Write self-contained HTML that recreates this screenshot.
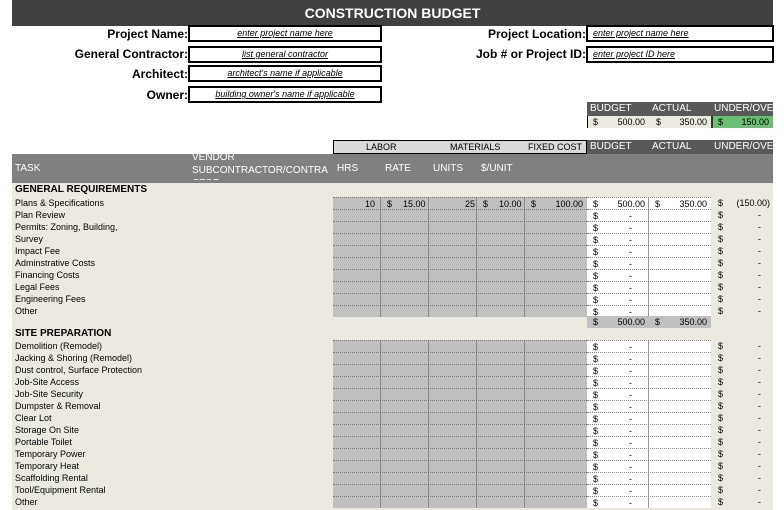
<!DOCTYPE html><html><head><style>
*{margin:0;padding:0;box-sizing:border-box}
body{width:784px;height:510px;background:#fff;position:relative;overflow:hidden;font-family:"Liberation Sans",sans-serif;font-size:9px;color:#000}
.a{position:absolute}
.title{left:12px;top:0;width:761px;height:26px;background:#404040;color:#fff;font-weight:bold;font-size:14px;text-align:center;line-height:26px}
.lab{font-weight:bold;font-size:12px;text-align:right;width:180px}
.box{border:2px solid #000;height:17px;font-style:italic;font-size:9px;text-align:center;line-height:13px;text-decoration:underline}
.bg{left:12px;top:183px;width:761px;height:327px;background:#ECEAE0}
.hd{background:#808080;left:12px;top:154px;width:761px;height:29px;color:#fff;font-size:10px}
.r{position:absolute;left:12px;width:761px;height:12px;font-size:9px;line-height:12px}
.r .t{position:absolute;left:3px}
.g{position:absolute;left:321px;width:254px;height:12px;background:#c0c0c0;border-top:1px dotted #777;
background-image:linear-gradient(90deg,transparent 47px,#888 47px,#888 48px,transparent 48px,transparent 95px,#888 95px,#888 96px,transparent 96px,transparent 143px,#888 143px,#888 144px,transparent 144px,transparent 191px,#888 191px,#888 192px,transparent 192px)}
.w{position:absolute;left:575px;width:124px;height:12px;background:#fff;border-top:1px dotted #888;background-image:linear-gradient(90deg,transparent 61px,#999 61px,#999 62px,transparent 62px)}
.d{position:absolute}
.h b{font-weight:bold}
</style></head><body>
<div class="a title">CONSTRUCTION BUDGET</div>
<div class="a lab" style="left:8px;top:27px">Project Name:</div>
<div class="a box" style="left:188px;top:25px;width:194px">enter project name here</div>
<div class="a lab" style="left:8px;top:47px">General Contractor:</div>
<div class="a box" style="left:188px;top:46px;width:194px">list general contractor</div>
<div class="a lab" style="left:8px;top:67px">Architect:</div>
<div class="a box" style="left:188px;top:65px;width:194px">architect's name if applicable</div>
<div class="a lab" style="left:8px;top:88px">Owner:</div>
<div class="a box" style="left:188px;top:86px;width:194px">building owner's name if applicable</div>
<div class="a lab" style="left:406px;top:27px">Project Location:</div>
<div class="a box" style="left:586px;top:25px;width:188px;text-align:left;padding-left:5px">enter project name here</div>
<div class="a lab" style="left:406px;top:47px">Job # or Project ID:</div>
<div class="a box" style="left:586px;top:46px;width:188px;text-align:left;padding-left:5px">enter project ID here</div>

<div class="a" style="left:587px;top:102px;width:186px;height:14px;background:#595959;color:#fff;font-size:10px;line-height:14px"><span class="d" style="left:3px">BUDGET</span><span class="d" style="left:65px">ACTUAL</span><span class="d" style="left:127px">UNDER/OVE</span></div>
<div class="a" style="left:587px;top:116px;width:124px;height:12px;background:#ECEAE0;border-left:1px solid #000;line-height:12px"><span class="d" style="left:5px">$</span><span class="d" style="right:66px">500.00</span><span class="d" style="left:68px">$</span><span class="d" style="right:4px">350.00</span></div>
<div class="a" style="left:711px;top:116px;width:62px;height:12px;background:#6abf74;border-left:2px solid #333;line-height:12px"><span class="d" style="left:5px">$</span><span class="d" style="right:4px">150.00</span></div>

<div class="a" style="left:333px;top:140px;width:254px;height:14px;background:#d9d9d9;border:1px solid #000;font-size:9px;line-height:13px"><span class="d" style="left:32px">LABOR</span><span class="d" style="left:116px">MATERIALS</span><span class="d" style="left:194px">FIXED COST</span></div>
<div class="a" style="left:587px;top:140px;width:186px;height:14px;background:#595959;color:#fff;font-size:10px;line-height:14px"><span class="d" style="left:3px">BUDGET</span><span class="d" style="left:65px">ACTUAL</span><span class="d" style="left:127px">UNDER/OVE</span></div>
<div class="a hd"><span class="d" style="left:3px;top:9px">TASK</span><span class="d" style="left:180px;top:-3px;line-height:13px;height:29px;overflow:hidden;width:140px">VENDOR<br>SUBCONTRACTOR/CONTRA<br>CTOR</span><span class="d" style="left:325px;top:9px">HRS</span><span class="d" style="left:373px;top:9px">RATE</span><span class="d" style="left:421px;top:9px">UNITS</span><span class="d" style="left:469px;top:9px">$/UNIT</span></div>
<div class="a bg"></div>

<div class="r" style="top:184px"><b class="t" style="font-size:10px">GENERAL REQUIREMENTS</b></div>
<div class="r" style="top:197px"><span class="t">Plans &amp; Specifications</span><div class="g"><span class="d" style="right:212px">10</span><span class="d" style="left:54px">$</span><span class="d" style="left:70px">15.00</span><span class="d" style="right:112px">25</span><span class="d" style="left:150px">$</span><span class="d" style="left:166px">10.00</span><span class="d" style="left:198px">$</span><span class="d" style="right:4px">100.00</span></div><div class="w"><span class="d" style="left:6px">$</span><span class="d" style="right:66px">500.00</span><span class="d" style="left:68px">$</span><span class="d" style="right:4px">350.00</span></div><span class="d" style="left:706px">$</span><span class="d" style="right:3px">(150.00)</span></div>
<div class="r" style="top:209px"><span class="t">Plan Review</span><div class="g"></div><div class="w"><span class="d" style="left:6px">$</span><span class="d" style="left:42px">-</span></div><span class="d" style="left:706px">$</span><span class="d" style="right:12px">-</span></div>
<div class="r" style="top:221px"><span class="t">Permits: Zoning, Building,</span><div class="g"></div><div class="w"><span class="d" style="left:6px">$</span><span class="d" style="left:42px">-</span></div><span class="d" style="left:706px">$</span><span class="d" style="right:12px">-</span></div>
<div class="r" style="top:233px"><span class="t">Survey</span><div class="g"></div><div class="w"><span class="d" style="left:6px">$</span><span class="d" style="left:42px">-</span></div><span class="d" style="left:706px">$</span><span class="d" style="right:12px">-</span></div>
<div class="r" style="top:245px"><span class="t">Impact Fee</span><div class="g"></div><div class="w"><span class="d" style="left:6px">$</span><span class="d" style="left:42px">-</span></div><span class="d" style="left:706px">$</span><span class="d" style="right:12px">-</span></div>
<div class="r" style="top:257px"><span class="t">Adminstrative Costs</span><div class="g"></div><div class="w"><span class="d" style="left:6px">$</span><span class="d" style="left:42px">-</span></div><span class="d" style="left:706px">$</span><span class="d" style="right:12px">-</span></div>
<div class="r" style="top:269px"><span class="t">Financing Costs</span><div class="g"></div><div class="w"><span class="d" style="left:6px">$</span><span class="d" style="left:42px">-</span></div><span class="d" style="left:706px">$</span><span class="d" style="right:12px">-</span></div>
<div class="r" style="top:281px"><span class="t">Legal Fees</span><div class="g"></div><div class="w"><span class="d" style="left:6px">$</span><span class="d" style="left:42px">-</span></div><span class="d" style="left:706px">$</span><span class="d" style="right:12px">-</span></div>
<div class="r" style="top:293px"><span class="t">Engineering Fees</span><div class="g"></div><div class="w"><span class="d" style="left:6px">$</span><span class="d" style="left:42px">-</span></div><span class="d" style="left:706px">$</span><span class="d" style="right:12px">-</span></div>
<div class="r" style="top:305px"><span class="t">Other</span><div class="g"></div><div class="w"><span class="d" style="left:6px">$</span><span class="d" style="left:42px">-</span></div><span class="d" style="left:706px">$</span><span class="d" style="right:12px">-</span></div>
<div class="r" style="top:316px"><div class="w" style="background:#c0c0c0;border:none"><span class="d" style="left:6px">$</span><span class="d" style="right:66px">500.00</span><span class="d" style="left:68px">$</span><span class="d" style="right:4px">350.00</span></div></div>

<div class="r" style="top:328px"><b class="t" style="font-size:10px">SITE PREPARATION</b></div>
<div class="r" style="top:340px"><span class="t">Demolition (Remodel)</span><div class="g"></div><div class="w"><span class="d" style="left:6px">$</span><span class="d" style="left:42px">-</span></div><span class="d" style="left:706px">$</span><span class="d" style="right:12px">-</span></div>
<div class="r" style="top:352px"><span class="t">Jacking &amp; Shoring (Remodel)</span><div class="g"></div><div class="w"><span class="d" style="left:6px">$</span><span class="d" style="left:42px">-</span></div><span class="d" style="left:706px">$</span><span class="d" style="right:12px">-</span></div>
<div class="r" style="top:364px"><span class="t">Dust control, Surface Protection</span><div class="g"></div><div class="w"><span class="d" style="left:6px">$</span><span class="d" style="left:42px">-</span></div><span class="d" style="left:706px">$</span><span class="d" style="right:12px">-</span></div>
<div class="r" style="top:376px"><span class="t">Job-Site Access</span><div class="g"></div><div class="w"><span class="d" style="left:6px">$</span><span class="d" style="left:42px">-</span></div><span class="d" style="left:706px">$</span><span class="d" style="right:12px">-</span></div>
<div class="r" style="top:388px"><span class="t">Job-Site Security</span><div class="g"></div><div class="w"><span class="d" style="left:6px">$</span><span class="d" style="left:42px">-</span></div><span class="d" style="left:706px">$</span><span class="d" style="right:12px">-</span></div>
<div class="r" style="top:400px"><span class="t">Dumpster &amp; Removal</span><div class="g"></div><div class="w"><span class="d" style="left:6px">$</span><span class="d" style="left:42px">-</span></div><span class="d" style="left:706px">$</span><span class="d" style="right:12px">-</span></div>
<div class="r" style="top:412px"><span class="t">Clear Lot</span><div class="g"></div><div class="w"><span class="d" style="left:6px">$</span><span class="d" style="left:42px">-</span></div><span class="d" style="left:706px">$</span><span class="d" style="right:12px">-</span></div>
<div class="r" style="top:424px"><span class="t">Storage On Site</span><div class="g"></div><div class="w"><span class="d" style="left:6px">$</span><span class="d" style="left:42px">-</span></div><span class="d" style="left:706px">$</span><span class="d" style="right:12px">-</span></div>
<div class="r" style="top:436px"><span class="t">Portable Toilet</span><div class="g"></div><div class="w"><span class="d" style="left:6px">$</span><span class="d" style="left:42px">-</span></div><span class="d" style="left:706px">$</span><span class="d" style="right:12px">-</span></div>
<div class="r" style="top:448px"><span class="t">Temporary Power</span><div class="g"></div><div class="w"><span class="d" style="left:6px">$</span><span class="d" style="left:42px">-</span></div><span class="d" style="left:706px">$</span><span class="d" style="right:12px">-</span></div>
<div class="r" style="top:460px"><span class="t">Temporary Heat</span><div class="g"></div><div class="w"><span class="d" style="left:6px">$</span><span class="d" style="left:42px">-</span></div><span class="d" style="left:706px">$</span><span class="d" style="right:12px">-</span></div>
<div class="r" style="top:472px"><span class="t">Scaffolding Rental</span><div class="g"></div><div class="w"><span class="d" style="left:6px">$</span><span class="d" style="left:42px">-</span></div><span class="d" style="left:706px">$</span><span class="d" style="right:12px">-</span></div>
<div class="r" style="top:484px"><span class="t">Tool/Equipment Rental</span><div class="g"></div><div class="w"><span class="d" style="left:6px">$</span><span class="d" style="left:42px">-</span></div><span class="d" style="left:706px">$</span><span class="d" style="right:12px">-</span></div>
<div class="r" style="top:496px"><span class="t">Other</span><div class="g"></div><div class="w"><span class="d" style="left:6px">$</span><span class="d" style="left:42px">-</span></div><span class="d" style="left:706px">$</span><span class="d" style="right:12px">-</span></div>
</body></html>
